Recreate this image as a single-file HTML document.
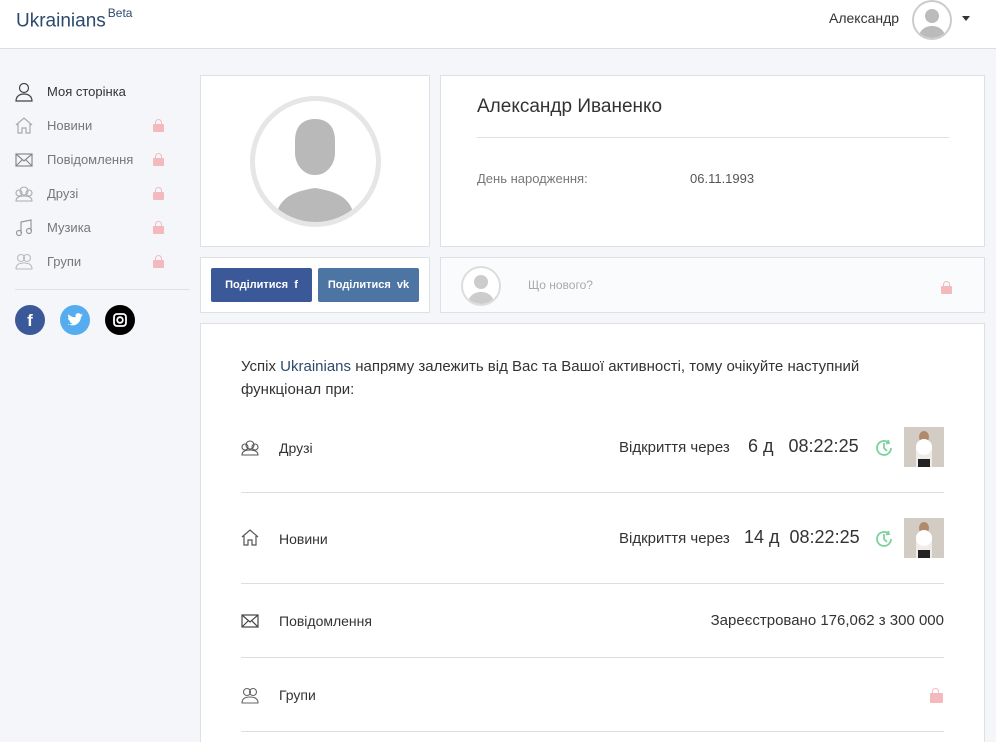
<!DOCTYPE html>
<html><head><meta charset="utf-8"><style>
*{box-sizing:border-box;margin:0;padding:0}
html,body{width:996px;height:742px;overflow:hidden}
body{background:#f5f6fa;font-family:"Liberation Sans",sans-serif;color:#333;position:relative}
.hdr{position:absolute;left:0;top:0;width:996px;height:49px;background:#fff;border-bottom:1px solid #dcdde2}
.logo{position:absolute;left:16px;top:8px;font-size:19px;color:#2d4a6e}
.logo sup{font-size:12px;position:relative;top:-2px;margin-left:2px}
.user{position:absolute;left:829px;top:10px;font-size:14px;color:#333}
.ava{position:absolute;border-radius:50%;background:#fff;border:2px solid #ddd;overflow:hidden}
.card{position:absolute;background:#fff;border:1px solid #dfe0e4}
.nav{position:absolute;left:16px;font-size:13px;color:#777}
.lock{position:absolute;left:153px;width:11px;height:8px;background:#f4b9bc;border-radius:1px}
.lock:before{content:"";position:absolute;left:2px;top:-5px;width:5px;height:6px;border:1.5px solid #f4b9bc;border-bottom:none;border-radius:4px 4px 0 0}
.btn{position:absolute;top:268px;height:34px;color:#fff;font-size:11px;font-weight:bold;text-align:center;line-height:34px;border-radius:2px}
.row{position:absolute;left:241px;width:703px;font-size:14px;color:#333}
.hr{position:absolute;left:241px;width:703px;height:1px;background:#ddd}
.thumb{position:absolute;left:904px;width:40px;height:40px;background:#d2ccc5;overflow:hidden}
.thumb b{position:absolute;left:15px;top:4px;width:10px;height:12px;border-radius:50%;background:#b08a6a}
.thumb s{position:absolute;left:12px;top:14px;width:16px;height:26px;background:#f0ece8;border-radius:6px 6px 0 0}
.thumb u{position:absolute;left:14px;top:32px;width:12px;height:8px;background:#222}
.thumb i{position:absolute;left:12px;top:12px;width:16px;height:16px;border-radius:50%;background:#fff}
</style></head><body>
<div class="hdr">
<div class="logo">Ukrainians<sup>Beta</sup></div>
<div class="user">Александр</div>
<div class="ava" style="left:912px;top:0;width:40px;height:40px;border-color:#ccc">
<svg width="36" height="36" viewBox="0 0 36 36"><circle cx="18" cy="14" r="7" fill="#bbb"/><path d="M4 36c2-9 8-12 14-12s12 3 14 12z" fill="#bbb"/></svg></div>
<div style="position:absolute;left:962px;top:16px;border:4px solid transparent;border-top:5px solid #333"></div>
</div>

<svg style="position:absolute;left:15px;top:82px" width="18" height="20" viewBox="0 0 18 20" fill="none" stroke="#444" stroke-width="1.2"><circle cx="9" cy="6" r="4.5"/><path d="M1 19c0-5 4-7 8-7s8 2 8 7z"/></svg>
<div class="nav" style="top:84px;left:47px;color:#333">Моя сторінка</div>
<svg style="position:absolute;left:15px;top:117px" width="18" height="17" viewBox="0 0 18 17" fill="none" stroke="#aaa" stroke-width="1.2"><path d="M1 8L9 1l8 7M3 7v9h4v-5h4v5h4V7"/></svg>
<div class="nav" style="top:118px;left:47px">Новини</div><div class="lock" style="top:124px"></div>
<svg style="position:absolute;left:15px;top:153px" width="18" height="14" viewBox="0 0 18 14" fill="none" stroke="#888" stroke-width="1.2"><rect x="1" y="1" width="16" height="12"/><path d="M1 1l8 7 8-7M1 13l6-6M17 13l-6-6"/></svg>
<div class="nav" style="top:152px;left:47px">Повідомлення</div><div class="lock" style="top:158px"></div>
<svg style="position:absolute;left:15px;top:185px" width="18" height="17" viewBox="0 0 18 17" fill="none" stroke="#aaa" stroke-width="1.1"><circle cx="9" cy="6" r="4"/><circle cx="4" cy="8" r="3"/><circle cx="14" cy="8" r="3"/><path d="M1 16c0-4 4-5 8-5s8 1 8 5z"/></svg>
<div class="nav" style="top:186px;left:47px">Друзі</div><div class="lock" style="top:192px"></div>
<svg style="position:absolute;left:15px;top:219px" width="18" height="18" viewBox="0 0 18 18" fill="none" stroke="#999" stroke-width="1.2"><path d="M6 14V3l10-2v11"/><circle cx="4" cy="14" r="2.5"/><circle cx="14" cy="12" r="2.5"/></svg>
<div class="nav" style="top:220px;left:47px">Музика</div><div class="lock" style="top:226px"></div>
<svg style="position:absolute;left:15px;top:253px" width="18" height="17" viewBox="0 0 18 17" fill="none" stroke="#bbb" stroke-width="1.1"><circle cx="6" cy="5" r="3.5"/><circle cx="12" cy="5" r="3.5"/><path d="M1 16c0-4 3-6 8-6s8 2 8 6z"/></svg>
<div class="nav" style="top:254px;left:47px">Групи</div><div class="lock" style="top:260px"></div>
<div style="position:absolute;left:15px;top:289px;width:175px;height:1px;background:#e0e0e4"></div>
<div style="position:absolute;left:15px;top:305px;width:30px;height:30px;border-radius:50%;background:#3b5998;color:#fff;font-weight:bold;font-size:17px;text-align:center;line-height:31px">f</div>
<div style="position:absolute;left:60px;top:305px;width:30px;height:30px;border-radius:50%;background:#55acee"><svg width="30" height="30" viewBox="0 0 30 30"><path d="M8 19c5 3 12 1 13-7l2-2-2 .5 1.5-2-2 .7c-2-2-5-1-5 2v1c-3 0-5-1-7-3-1 2 0 4 1 4-1 0-1 0-1.5-.3 0 2 1.5 3 3 3.3h-1.5c.5 1.5 2 2 3 2-1.5 1-3 1.5-4.5 1.8z" fill="#fff"/></svg></div>
<div style="position:absolute;left:105px;top:305px;width:30px;height:30px;border-radius:50%;background:#000"><svg width="30" height="30" viewBox="0 0 30 30" fill="none" stroke="#fff" stroke-width="1.8"><rect x="9" y="9" width="12" height="12" rx="3"/><circle cx="15" cy="15" r="2.8"/></svg></div>

<div class="card" style="left:200px;top:75px;width:230px;height:172px">
<div class="ava" style="left:49px;top:20px;width:131px;height:131px;border:5px solid #e6e6e6">
<svg width="121" height="121" viewBox="0 0 121 121"><path d="M40 40c0-16 9-22 20-22s20 6 20 22v12c0 10-7 22-20 22S40 62 40 52z" fill="#b9b9b9"/><path d="M20 121c2-22 14-30 40-34 26 4 38 12 40 34z" fill="#b9b9b9"/></svg></div>
</div>
<div class="card" style="left:440px;top:75px;width:545px;height:172px">
<div style="position:absolute;left:36px;top:20px;font-size:19px;color:#333">Александр Иваненко</div>
<div style="position:absolute;left:36px;top:61px;width:472px;height:1px;background:#e0e0e0"></div>
<div style="position:absolute;left:36px;top:95px;font-size:13px;color:#777">День народження:</div>
<div style="position:absolute;left:249px;top:95px;font-size:13px;color:#555">06.11.1993</div>
</div>
<div class="card" style="left:200px;top:257px;width:230px;height:56px"></div>
<div class="btn" style="left:211px;width:101px;background:#3b5998">Поділитися &nbsp;f</div>
<div class="btn" style="left:318px;width:101px;background:#4c75a3">Поділитися &nbsp;vk</div>
<div class="card" style="left:440px;top:257px;width:545px;height:56px;background:#fafbfc">
<div class="ava" style="left:20px;top:8px;width:40px;height:40px;border-color:#ddd"><svg width="36" height="36" viewBox="0 0 36 36"><circle cx="18" cy="14" r="7" fill="#ccc"/><path d="M4 36c2-9 8-12 14-12s12 3 14 12z" fill="#ccc"/></svg></div>
<div style="position:absolute;left:87px;top:20px;font-size:12px;color:#aaa">Що нового?</div>
<div class="lock" style="left:500px;top:28px"></div>
</div>

<div class="card" style="left:200px;top:323px;width:785px;height:440px"></div>
<div class="row" style="top:355px;width:650px;line-height:23px;font-size:15px">Успіх <span style="color:#2d4a6e">Ukrainians</span> напряму залежить від Вас та Вашої активності, тому очікуйте наступний функціонал при:</div>

<svg style="position:absolute;left:241px;top:439px" width="18" height="17" viewBox="0 0 18 17" fill="none" stroke="#555" stroke-width="1.1"><circle cx="9" cy="6" r="4"/><circle cx="4" cy="8" r="3"/><circle cx="14" cy="8" r="3"/><path d="M1 16c0-4 4-5 8-5s8 1 8 5z"/></svg>
<div class="row" style="top:440px;left:279px">Друзі</div>
<div style="position:absolute;left:619px;top:439px;font-size:15px">Відкриття через</div>
<div style="position:absolute;left:748px;top:436px;font-size:18px">6 д &nbsp;&nbsp;08:22:25</div>
<svg style="position:absolute;left:874px;top:438px" width="20" height="20" viewBox="0 0 20 20" fill="none" stroke="#7dd3a0" stroke-width="1.8"><path d="M17 10a7 7 0 1 1-3-5.8"/><path d="M10 5v5l3 3M14 2l1 3-3 .5"/></svg>
<div class="thumb" style="top:427px"><b></b><s></s><u></u><i></i></div>
<div class="hr" style="top:492px"></div>

<svg style="position:absolute;left:241px;top:529px" width="18" height="17" viewBox="0 0 18 17" fill="none" stroke="#555" stroke-width="1.2"><path d="M1 8L9 1l8 7M3 7v9h4v-5h4v5h4V7"/></svg>
<div class="row" style="top:531px;left:279px">Новини</div>
<div style="position:absolute;left:619px;top:530px;font-size:15px">Відкриття через</div>
<div style="position:absolute;left:744px;top:527px;font-size:18px">14 д &nbsp;08:22:25</div>
<svg style="position:absolute;left:874px;top:529px" width="20" height="20" viewBox="0 0 20 20" fill="none" stroke="#7dd3a0" stroke-width="1.8"><path d="M17 10a7 7 0 1 1-3-5.8"/><path d="M10 5v5l3 3M14 2l1 3-3 .5"/></svg>
<div class="thumb" style="top:518px"><b></b><s></s><u></u><i></i></div>
<div class="hr" style="top:583px"></div>

<svg style="position:absolute;left:241px;top:614px" width="18" height="14" viewBox="0 0 18 14" fill="none" stroke="#444" stroke-width="1.2"><rect x="1" y="1" width="16" height="12"/><path d="M1 1l8 7 8-7M1 13l6-6M17 13l-6-6"/></svg>
<div class="row" style="top:613px;left:279px">Повідомлення</div>
<div style="position:absolute;left:701px;top:612px;font-size:15px;width:243px;text-align:right">Зареєстровано 176,062 з 300 000</div>
<div class="hr" style="top:657px"></div>

<svg style="position:absolute;left:241px;top:687px" width="18" height="17" viewBox="0 0 18 17" fill="none" stroke="#666" stroke-width="1.1"><circle cx="6" cy="5" r="3.5"/><circle cx="12" cy="5" r="3.5"/><path d="M1 16c0-4 3-6 8-6s8 2 8 6z"/></svg>
<div class="row" style="top:687px;left:279px">Групи</div>
<div class="lock" style="left:930px;top:693px;width:13px;height:10px"></div>
<div class="hr" style="top:731px"></div>
</body></html>
